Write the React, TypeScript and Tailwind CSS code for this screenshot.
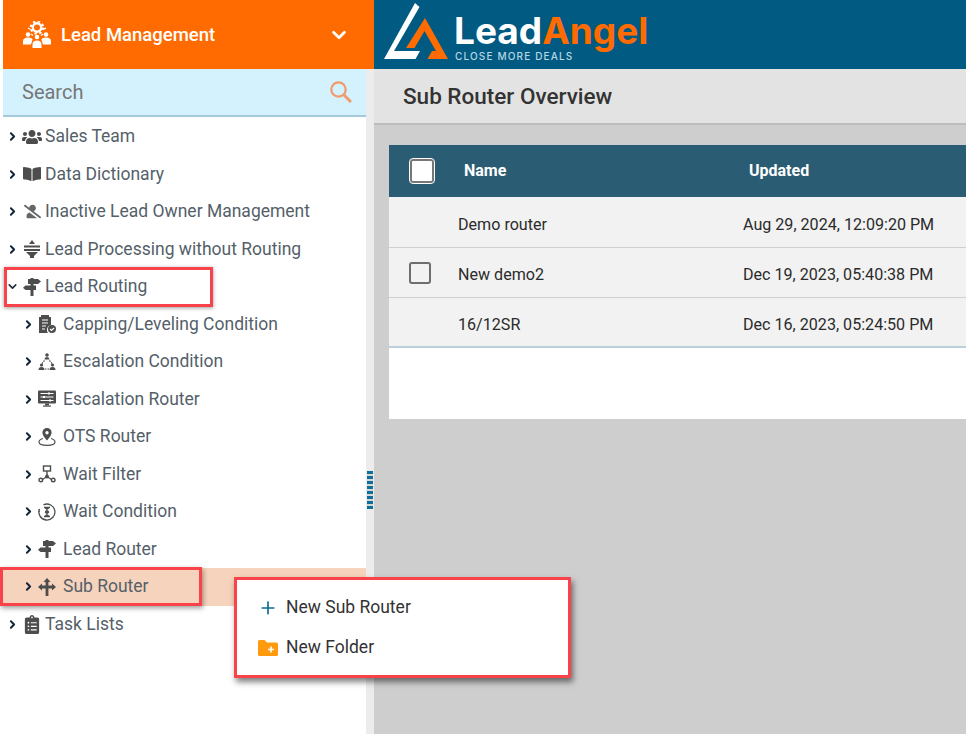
import React from 'react';
import { ChevronDown, ChevronRight, Plus } from 'lucide-react';
import { FaBookOpen, FaClipboardList, FaUsers, FaUserSlash } from 'react-icons/fa';

const iconColor = 'text-[#4d4d4d]';

const FunnelIcon = () => (
    <svg viewBox="0 0 16 18" className={`h-[18px] w-[16px] ${iconColor}`} fill="currentColor">
        <path d="M8 0l3 4H5z" />
        <rect x="0" y="5.5" width="16" height="2" />
        <rect x="0" y="9" width="16" height="2" />
        <path d="M2 12h12l-4 4v2H6v-2z" />
    </svg>
);

const SignpostIcon = () => (
    <svg viewBox="0 0 18 18" className={`h-[18px] w-[18px] ${iconColor}`} fill="currentColor">
        <path d="M5 1h10l3 2.500L15 6H5z" />
        <path d="M2.500 7.500H13v4.500H2.500L0 9.750z" />
        <rect x="7.500" y="0" width="3" height="18" />
    </svg>
);

const MoveIcon = () => (
    <svg viewBox="0 0 18 18" className={`h-[18px] w-[18px] ${iconColor}`} fill="currentColor">
        <path d="M9 0l3.500 4H10.400v3.600H14V5.500L18 9l-4 3.500v-2.100h-3.600V18H7.600v-7.600H4v2.100L0 9l4-3.500v2.100h3.600V4H5.500z" />
    </svg>
);

const CappingIcon = () => (
    <svg viewBox="0 0 18 18" className={`h-[18px] w-[18px] ${iconColor}`} fill="currentColor">
        <path d="M1 2h2V0h8v2h2v8a5 5 0 0 0-3 8H1z" />
        <path d="M4 5h6M4 8h6M4 11h4M4 14h3" stroke="#fff" strokeWidth="1.2" />
        <circle cx="14" cy="14" r="4" />
        <path d="M12 14l1.500 1.500L16 13" stroke="#fff" strokeWidth="1.2" fill="none" />
    </svg>
);

const EscalationIcon = () => (
    <svg viewBox="0 0 18 18" className={`h-[18px] w-[18px] ${iconColor}`} fill="currentColor">
        <circle cx="9" cy="2" r="1.800" />
        <path d="M6.500 6.500a2.500 2.500 0 0 1 5 0z" />
        <circle cx="3.500" cy="12" r="1.600" />
        <path d="M0.500 17a3 3 0 0 1 6 0z" />
        <circle cx="14.500" cy="12" r="1.600" />
        <path d="M11.500 17a3 3 0 0 1 6 0z" />
        <path d="M6.500 7.500L4 10.500M11.500 7.500l2.500 3M7 16h4" stroke="currentColor" strokeWidth="1.200" strokeDasharray="1.500 1" />
    </svg>
);

const MonitorIcon = () => (
    <svg viewBox="0 0 18 18" className={`h-[18px] w-[18px] ${iconColor}`} fill="currentColor">
        <rect x="0" y="0.500" width="18" height="13" rx="1" />
        <rect x="7" y="13.500" width="4" height="2" />
        <rect x="5" y="15.500" width="8" height="1.200" />
        <path d="M2.500 3.500h13M2.500 7h13M2.500 10.500h13" stroke="#fff" strokeWidth="1" />
        <rect x="10" y="2.500" width="2" height="2" fill="#fff" />
        <rect x="5" y="6" width="2" height="2" fill="#fff" />
        <rect x="11" y="9.500" width="2" height="2" fill="#fff" />
    </svg>
);

const PinIcon = () => (
    <svg viewBox="0 0 18 18" className={`h-[18px] w-[18px] ${iconColor}`}>
        <path fillRule="evenodd" fill="currentColor" d="M9 0a4.600 4.600 0 0 1 4.600 4.600C13.600 8 9 12.500 9 12.500S4.400 8 4.400 4.600A4.600 4.600 0 0 1 9 0zm0 3a1.700 1.700 0 1 0 0 3.400A1.700 1.700 0 0 0 9 3z" />
        <path d="M5 10.500C2.500 11.200 1 12.500 1 14c0 1.900 3.500 3.300 8 3.300s8-1.400 8-3.300c0-1.500-1.500-2.800-4-3.500" fill="none" stroke="currentColor" strokeWidth="1.200" />
    </svg>
);

const FlowIcon = () => (
    <svg viewBox="0 0 18 18" className={`h-[18px] w-[18px] ${iconColor}`} fill="none" stroke="currentColor" strokeWidth="1.400">
        <rect x="5.500" y="1" width="7" height="5" />
        <path d="M9 6v5.500M4.500 14.500L9 11.500l4.500 3" />
        <circle cx="2.800" cy="15" r="1.800" />
        <circle cx="9" cy="11.500" r="1.200" fill="currentColor" />
        <circle cx="15.200" cy="15" r="1.800" />
    </svg>
);

const WaitIcon = () => (
    <svg viewBox="0 0 18 18" className={`h-[18px] w-[18px] ${iconColor}`} fill="none" stroke="currentColor" strokeWidth="1.300">
        <path d="M5.500 1.800A8 8 0 1 1 1.500 6" />
        <path d="M1 9a8 8 0 0 1 .500-3" strokeDasharray="1.200 1" />
        <path d="M6 4.500h6M6 13.500h6" />
        <path d="M6.800 4.500c0 2.500 4.400 2.500 4.400 4.500s-4.400 2-4.400 4.500h4.400c0-2.500-4.400-2.500-4.400-4.500s4.400-2 4.400-4.500z" fill="currentColor" stroke="none" />
    </svg>
);

const GearPeopleIcon = () => (
    <svg viewBox="0 0 28 27" className="h-[27px] w-[28px] text-white" fill="currentColor">
        <circle cx="14" cy="6.500" r="4.200" fill="none" stroke="currentColor" strokeWidth="2.400" />
        <circle cx="14" cy="6.500" r="6.200" fill="none" stroke="currentColor" strokeWidth="2" strokeDasharray="2.400 2.470" />
        <path d="M5 7l2.500 1.500M23 7l-2.500 1.500M8 13l2 1.500M20 13l-2 1.500" stroke="currentColor" strokeWidth="1.400" />
        <circle cx="14" cy="16" r="2.300" />
        <path d="M9.500 27v-4c0-2 2-3.500 4.500-3.500s4.500 1.500 4.500 3.500v4z" />
        <circle cx="5" cy="13.500" r="2.300" />
        <path d="M0 23.500v-3.500c0-2 2-3.400 5-3.400s4 .8 4.600 2L8 23.500z" />
        <circle cx="23" cy="13.500" r="2.300" />
        <path d="M28 23.500v-3.500c0-2-2-3.400-5-3.400s-4 .8-4.600 2L20 23.500z" />
    </svg>
);

const FolderPlusIcon = () => (
    <svg viewBox="0 0 20 16" className="h-[16px] w-[20px]">
        <path d="M0 1.500A1.500 1.500 0 0 1 1.500 0h5L9 2.500h9.500A1.500 1.500 0 0 1 20 4v10.500a1.500 1.500 0 0 1-1.500 1.500h-17A1.500 1.500 0 0 1 0 14.500z" fill="#ff9a0d" />
        <path d="M13 6.500v6M10 9.500h6" stroke="#fff" strokeWidth="1.600" />
    </svg>
);

const SearchGlyph = () => (
    <svg viewBox="0 0 22 22" className="h-[22px] w-[22px] text-[#f19a6b]" fill="none" stroke="currentColor">
        <circle cx="8.500" cy="8.500" r="7.200" strokeWidth="2.200" />
        <path d="M13.800 13.800L21 21" strokeWidth="3" />
    </svg>
);

const LeadAngelLogo = () => (
    <div className="flex items-start pl-[10px] pt-[3px]">
        {/* mark: white stroke and orange triangle */}
        <svg viewBox="0 0 66 57" className="h-[57px] w-[66px] shrink-0">
            <path d="M31 0l4.500 4L10 48h26l-4.500 8H0z" fill="#fff" />
            <path d="M41 15l23 41H43.500l4.500-8h4L40.500 28 30.500 45H22z" fill="#ff6b00" />
        </svg>
        <div className="ml-[4px] flex flex-col">
            <div className="mt-[13px] flex font-['Inter',sans-serif] text-[37px] font-bold leading-[30px]">
                <div className="text-white">Lead</div>
                <div className="text-[#ff6b00]">Angel</div>
            </div>
            <div className="ml-[1px] mt-[4px] font-['Inter',sans-serif] text-[10px] font-medium leading-[12px] tracking-[1.15px] text-[#b9d6e3]">CLOSE MORE DEALS</div>
        </div>
    </div>
);

interface TreeItem {
    label: string;
    icon: React.ReactNode;
    child?: boolean;
    open?: boolean;
    active?: boolean;
}

const reactIcon = `${iconColor} text-[18px]`;

const treeItems: TreeItem[] = [
    { label: 'Sales Team', icon: <FaUsers className="shrink-0 text-[20px] text-[#4d4d4d]" /> },
    { label: 'Data Dictionary', icon: <FaBookOpen className={reactIcon} /> },
    { label: 'Inactive Lead Owner Management', icon: <FaUserSlash className="text-[17px] text-[#666]" /> },
    { label: 'Lead Processing without Routing', icon: <FunnelIcon /> },
    { label: 'Lead Routing', icon: <SignpostIcon />, open: true },
    { label: 'Capping/Leveling Condition', icon: <CappingIcon />, child: true },
    { label: 'Escalation Condition', icon: <EscalationIcon />, child: true },
    { label: 'Escalation Router', icon: <MonitorIcon />, child: true },
    { label: 'OTS Router', icon: <PinIcon />, child: true },
    { label: 'Wait Filter', icon: <FlowIcon />, child: true },
    { label: 'Wait Condition', icon: <WaitIcon />, child: true },
    { label: 'Lead Router', icon: <SignpostIcon />, child: true },
    { label: 'Sub Router', icon: <MoveIcon />, child: true, active: true },
    { label: 'Task Lists', icon: <FaClipboardList className="text-[19px] text-[#4d4d4d]" /> },
];

const rows = [
    { name: 'Demo router', updated: 'Aug 29, 2024, 12:09:20 PM' },
    { name: 'New demo2', updated: 'Dec 19, 2023, 05:40:38 PM', check: true },
    { name: '16/12SR', updated: 'Dec 16, 2023, 05:24:50 PM' },
];

export default function App() {
    return (
        <div className="relative flex h-[734px] w-[966px] overflow-hidden bg-white pl-[3px] font-['Roboto',sans-serif]">
            <aside className="flex w-[371px] shrink-0 flex-col">
                <div className="flex h-[69px] shrink-0 items-center bg-[#ff6b00] pl-[20px] pr-[24px] text-white">
                    <GearPeopleIcon />
                    <span className="ml-[10px] mt-[1px] flex-1 text-[18.5px] font-medium leading-none">Lead Management</span>
                    <ChevronDown size={22} strokeWidth={3} />
                </div>
                <div className="flex min-h-0 flex-1">
                    <div className="flex w-[363px] flex-col">
                        <div className="flex h-[48px] shrink-0 items-center justify-between border-b-2 border-[#a3c9da] bg-[#d4f2fe] pl-[19px] pr-[14px]">
                            <span className="text-[20px] text-[#777]">Search</span>
                            <SearchGlyph />
                        </div>
                        <ul className="mt-[1px]">
                            {treeItems.map((item) => (
                                <li
                                    key={item.label}
                                    className={`flex h-[37.5px] items-center ${item.child ? 'pl-[19px]' : 'pl-[3px]'} ${item.active ? 'bg-[#f5d3bc]' : ''}`}
                                >
                                    {item.open ? (
                                        <ChevronDown size={13} strokeWidth={3} className="w-[13px] shrink-0 text-[#1f2d3d]" />
                                    ) : (
                                        <ChevronRight size={13} strokeWidth={3.5} className="w-[13px] shrink-0 text-[#10233a]" />
                                    )}
                                    <span className={`flex w-[18px] shrink-0 justify-center ${item.child ? 'ml-[3px]' : 'ml-[4px]'}`}>{item.icon}</span>
                                    <span className={`text-[17.5px] leading-none text-[#555f69] ${item.child ? 'ml-[7px]' : 'ml-[4px]'}`}>{item.label}</span>
                                </li>
                            ))}
                        </ul>
                    </div>
                    <div className="flex w-[8px] items-start justify-center bg-[#ececec]">
                        <div className="mt-[402px] h-[38px] w-[6px] bg-[repeating-linear-gradient(to_bottom,#0f6f9b_0,#0f6f9b_3px,#d8d8d8_3px,#d8d8d8_5px)]" />
                    </div>
                </div>
            </aside>

            <main className="flex min-w-0 flex-1 flex-col bg-[#cecece]">
                <header className="h-[69px] shrink-0 bg-[#005a82]">
                    <LeadAngelLogo />
                </header>
                <div className="flex h-[56px] shrink-0 items-center border-b-2 border-[#bcbcbc] bg-[#e3e3e3] pl-[29px]">
                    <h1 className="text-[22.5px] font-medium leading-none text-[#333]">Sub Router Overview</h1>
                </div>
                <section className="ml-[15px] mt-[20px] h-[274px] w-[600px] bg-white">
                    <div className="flex h-[52px] items-center bg-[#2a5c74] text-[16px] font-bold text-white">
                        <span className="ml-[21px] box-border h-[24px] w-[24px] rounded-[3px] border-2 border-[#777] bg-white outline outline-1 outline-white" />
                        <span className="ml-[30px] w-[285px]">Name</span>
                        <span>Updated</span>
                    </div>
                    {rows.map((row, idx) => (
                        <div
                            key={row.name}
                            className={`flex items-center bg-[#f2f2f2] text-[16.1px] text-[#2b2b2b] ${idx === 1 ? 'pt-[5px]' : 'pt-[6px]'} ${idx === 2 ? 'h-[50px] border-b-2 border-[#b9d0da]' : 'h-[50.5px] border-b border-[#d0d0d0]'}`}
                        >
                            <span className="ml-[20px] w-[22px] shrink-0">
                                {row.check && <span className="mb-[3px] block h-[22px] w-[22px] rounded-[3px] border-2 border-[#6e6e6e]" />}
                            </span>
                            <span className="ml-[27px] w-[285px] shrink-0">{row.name}</span>
                            <span>{row.updated}</span>
                        </div>
                    ))}
                </section>
            </main>

            {/* annotation boxes drawn over the screenshot */}
            <div className="absolute left-[4px] top-[267px] h-[40px] w-[209px] border-[3px] border-[#f8434a] shadow-[0_1px_4px_rgba(0,0,0,0.4)]" />
            <div className="absolute left-[0px] top-[567px] h-[39px] w-[202px] border-[3px] border-[#f8434a] shadow-[1px_2px_5px_rgba(0,0,0,0.4)]" />
            <div className="absolute left-[234px] top-[577px] flex h-[101px] w-[337px] flex-col border-[3px] border-[#f8434a] bg-white pt-[8px] text-[17.5px] leading-none text-[#333] shadow-[2px_4px_6px_rgba(0,0,0,0.5)]">
                <div className="flex h-[40px] items-center pl-[21px]">
                    <Plus size={20} strokeWidth={2} className="text-[#0f6a94]" />
                    <span className="ml-[8px]">New Sub Router</span>
                </div>
                <div className="flex h-[40px] items-center pl-[21px]">
                    <FolderPlusIcon />
                    <span className="ml-[8px]">New Folder</span>
                </div>
            </div>
        </div>
    );
}
